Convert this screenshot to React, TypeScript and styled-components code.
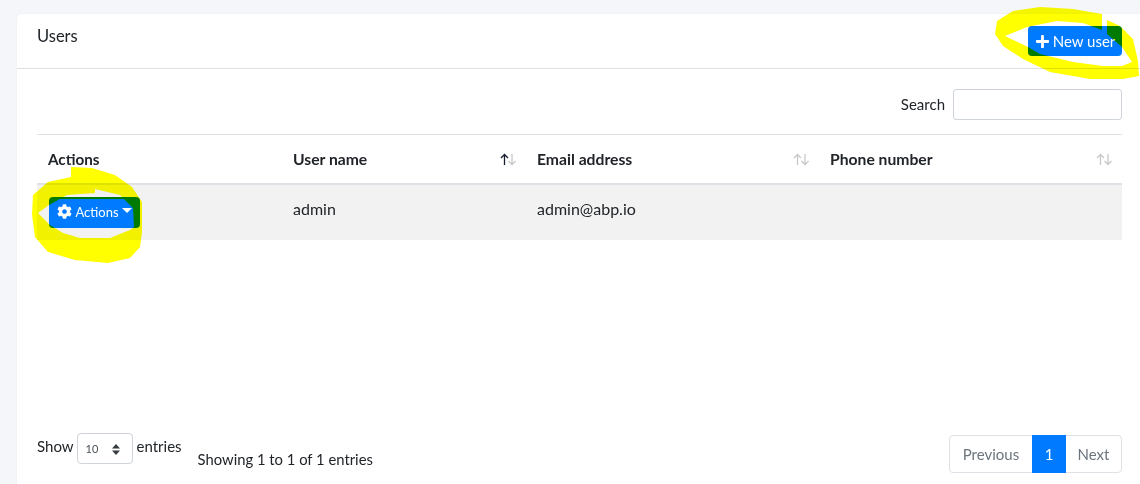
import { createGlobalStyle } from 'styled-components'
import styled from 'styled-components'
import { FaCog, FaPlus } from 'react-icons/fa'

const GlobalStyle = createGlobalStyle`
	html, body {
		margin: 0;
		padding: 0;
		background: #f4f6f9;
		overflow: hidden;
	}
	* {
		box-sizing: border-box;
	}
`

const Page = styled.div`
	width: 1140px;
	height: 484px;
	padding: 14px 0 0 17px;
	overflow: hidden;
	position: relative;
	font-family: 'Lato', 'Liberation Sans', sans-serif;
	font-size: 15px;
	color: #212529;
`

const Card = styled.section`
	width: 1123px;
	height: 470px;
	background: #fff;
	border-top-left-radius: 4px;
	box-shadow: 0 0 1px rgba(0, 0, 0, 0.13);
`

const CardHeader = styled.header`
	height: 55px;
	padding: 12px 18px 0 20px;
	border-bottom: 1px solid #dfdfdf;
	display: flex;
	justify-content: space-between;
	align-items: flex-start;
`

const Title = styled.h1`
	margin: 0;
	font-size: 16.5px;
	font-weight: 400;
	line-height: 20px;
`

const Button = styled.button<{ $small?: boolean }>`
	display: flex;
	align-items: center;
	justify-content: center;
	gap: 3px;
	border: 0;
	border-radius: 4px;
	background: #007bff;
	color: #fff;
	font-family: inherit;
	font-size: ${(p) => (p.$small ? '13px' : '15px')};
	height: ${(p) => (p.$small ? '31px' : '30px')};
	width: ${(p) => (p.$small ? '91px' : '94px')};
	padding: 0 0 ${(p) => (p.$small ? '2px' : '0')};
`

const CaretDown = styled.span`
	width: 0;
	height: 0;
	margin-bottom: 3px;
	border-left: 5px solid transparent;
	border-right: 5px solid transparent;
	border-top: 5px solid #fff;
`

const CardBody = styled.div`
	padding: 20px 18px 0 20px;
`

const SearchRow = styled.label`
	display: flex;
	justify-content: flex-end;
	align-items: center;
	gap: 8px;
	height: 31px;
	margin-bottom: 14px;
	line-height: 29px;
`

const SearchText = styled.span`
	margin-top: -1px;
`

const SearchInput = styled.input`
	width: 169px;
	height: 31px;
	border: 1px solid #ced4da;
	border-radius: 3px;
	background: #fff;
`

const Table = styled.div`
	border-top: 1px solid #dee2e6;
`

const Row = styled.div<{ $head?: boolean }>`
	display: grid;
	grid-template-columns: 244px 244px 293px 303px;
	height: ${(p) => (p.$head ? '50px' : '55px')};
	align-items: center;
	background: ${(p) => (p.$head ? '#fff' : '#f2f2f2')};
	border-bottom: ${(p) => (p.$head ? '2px solid #dee2e6' : '0')};
`

const HeadCell = styled.div`
	display: flex;
	justify-content: space-between;
	align-items: center;
	padding: 0 8px 0 12px;
	font-size: 15.7px;
	font-weight: 700;
	color: #212529;
`

const ActionsHead = styled(HeadCell)`
	padding-left: 11px;
	font-size: 15.2px;
`

const Cell = styled.div`
	padding: 0 8px 0 12px;
	font-size: 16px;
	margin-top: -9px;
`

const ActionCell = styled(Cell)`
	font-size: 13px;
	margin-top: 0;
`

const SortIcon = ({ active }: { active?: boolean }) => (
	<svg width='17' height='13' viewBox='0 0 17 13' fill='none' strokeWidth='1.3'>
		<path d='M4.5 12V2M1 5l3.5-3.5L8 5' stroke={active ? '#16202c' : '#c8c8c8'} />
		<path d='M12 1v10M8.5 8l3.5 3.5L15.5 8' stroke='#c8c8c8' />
	</svg>
)

const Footer = styled.div`
	margin-top: 193px;
	display: flex;
	align-items: flex-start;
`

const LengthLabel = styled.div`
	display: flex;
	align-items: flex-start;
	gap: 3px;
	line-height: 26px;
`

const LengthSelect = styled.div`
	width: 56px;
	height: 31px;
	margin-right: 1px;
	border: 1px solid #ced4da;
	border-radius: 4px;
	display: flex;
	align-items: center;
	justify-content: space-between;
	padding: 1px 12px 0 8px;
	font-size: 11px;
	color: #495057;
`

const Info = styled.div`
	margin: 16px 0 0 16px;
	font-size: 14.8px;
	line-height: 20px;
`

const Pager = styled.nav`
	margin: 2px 0 0 auto;
	display: flex;
	height: 38px;
	border: 1px solid #dee2e6;
	border-radius: 4px;
	color: #6c757d;
	width: 173px;
	align-items: stretch;
`

const PageItem = styled.span<{ $active?: boolean; $width: number }>`
	width: ${(p) => p.$width}px;
	display: flex;
	align-items: center;
	justify-content: center;
	margin: ${(p) => (p.$active ? '-1px 0' : '0')};
	background: ${(p) => (p.$active ? '#007bff' : 'transparent')};
	color: ${(p) => (p.$active ? '#fff' : '#6c757d')};
`

const Highlights = styled.svg`
	position: absolute;
	left: 0;
	top: 0;
	mix-blend-mode: multiply;
	pointer-events: none;
`

export default function App() {
	return (
		<Page>
			<GlobalStyle />
			<Card>
				<CardHeader>
					<Title>Users</Title>
					<Button>
						<FaPlus size={15} />
						New user
					</Button>
				</CardHeader>
				<CardBody>
					<SearchRow>
						<SearchText>Search</SearchText>
						<SearchInput />
					</SearchRow>
					<Table>
						<Row $head>
							<ActionsHead>Actions</ActionsHead>
							<HeadCell>
								User name
								<SortIcon active />
							</HeadCell>
							<HeadCell>
								Email address
								<SortIcon />
							</HeadCell>
							<HeadCell>
								Phone number
								<SortIcon />
							</HeadCell>
						</Row>
						<Row>
							<ActionCell>
								<Button $small>
									<FaCog size={15} />
									Actions
									<CaretDown />
								</Button>
							</ActionCell>
							<Cell>admin</Cell>
							<Cell>admin@abp.io</Cell>
							<Cell />
						</Row>
					</Table>
					<Footer>
						<LengthLabel>
							Show
							<LengthSelect>
								10
								<svg width='8' height='11' viewBox='0 0 8 11' fill='#343a40'>
									<path d='M4 0L8 4.5H0zM4 11L0 6.5h8z' />
								</svg>
							</LengthSelect>
							entries
						</LengthLabel>
						<Info>Showing 1 to 1 of 1 entries</Info>
						<Pager>
							<PageItem $width={82}>Previous</PageItem>
							<PageItem $active $width={34}>
								1
							</PageItem>
							<PageItem $width={55}>Next</PageItem>
						</Pager>
					</Footer>
				</CardBody>
			</Card>
			<Highlights width='1140' height='484' viewBox='0 0 1140 484' fill='#ffff00'>
				<path d='M1102 14 L1073 9 L1040 7 L1013 11 L997 21 L995 34 L1003 46 L1023 59 L1050 72 L1090 79 L1123 79 L1139 76 L1138 61 L1133 39 L1120 26 L1107 20 L1107 34 L1122 47 L1132 62 L1122 66 L1103 66 L1073 62 L1040 54 L1028 47 L1005 36 L1027 27 L1057 21 L1083 23 L1102 30 Z' />
				<path d='M71 167 L92 168 L115 175 L132 187 L142 202 L142 232 L140 247 L130 258 L108 263 L75 260 L48 252 L35 237 L32 215 L33 195 L48 182 L71 177 Z M95 189 L95 193 L67 195 L49 205 L38 213 L50 225 L63 233 L80 238 L110 238 L130 230 L134 227 L133 208 L120 195 Z' fillRule='evenodd' />
				<path d='M60 197 L128 197 L128 199 L60 199 Z' />
			</Highlights>
		</Page>
	)
}
